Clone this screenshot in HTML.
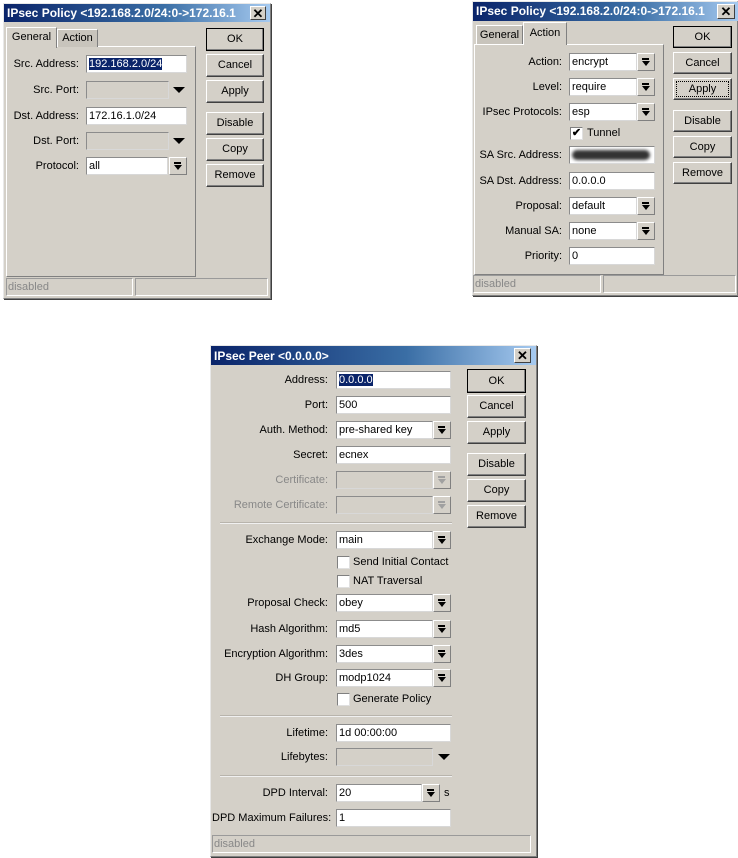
<!DOCTYPE html>
<html><head><meta charset="utf-8"><style>
*{box-sizing:border-box;margin:0;padding:0}
body{width:738px;height:858px;background:#fff;position:relative;font:11px "Liberation Sans",sans-serif;color:#000;overflow:hidden}
.a{position:absolute}
.dlg{position:absolute;background:#d4d0c8;border:1px solid #808080;border-top-color:#e8e8e8;border-left-color:#e8e8e8;box-shadow:1px 1px 0 #404040}
.tb{position:absolute;background:linear-gradient(90deg,#0a246a,#3a6ea5 60%,#a6caf0);color:#fff;font:bold 12px "Liberation Sans",sans-serif;padding:2px 0 0 3px;white-space:nowrap;overflow:hidden}
.cl{position:absolute;background:#d4d0c8;border:1px solid #404040;border-top-color:#fff;border-left-color:#fff;font:bold 13px "Liberation Sans",sans-serif;color:#000;text-align:center;line-height:13px}
.lb{position:absolute;text-align:right;white-space:nowrap;line-height:19px}
.f{position:absolute;background:#fff;border:1px solid #8c8c8c;border-right-color:#d8d8d8;border-bottom-color:#d8d8d8;height:18px;line-height:16px;padding-left:2px;white-space:nowrap;overflow:hidden}
.dis{background:#d4d0c8}
.btn{position:absolute;border:1px solid #404040;border-top-color:#fff;border-left-color:#fff;box-shadow:inset -1px -1px 0 #808080;text-align:center;line-height:20px;background:#d4d0c8}
.dd{position:absolute;width:18px;height:18px;border:1px solid #fff;border-right-color:#808080;border-bottom-color:#808080;background:#d4d0c8}
.dd:after{content:"";position:absolute;left:4px;top:4px;width:7px;height:2px;background:#000}
.dd:before{content:"";position:absolute;left:4px;top:7px;border-left:4px solid transparent;border-right:4px solid transparent;border-top:5px solid #000;width:0}
.dd.g:after{background:#a0a0a0}.dd.g:before{border-top-color:#a0a0a0}
.arr{position:absolute;width:0;height:0;border-left:6px solid transparent;border-right:6px solid transparent;border-top:6px solid #000}
.cb{position:absolute;width:13px;height:13px;background:#fff;border:1px solid #808080;border-right-color:#e0e0e0;border-bottom-color:#e0e0e0}
.st{position:absolute;border:1px solid #9a9a9a;border-right-color:#fff;border-bottom-color:#fff;height:18px;line-height:16px;color:#888;padding-left:1px}
.sep{position:absolute;height:2px;border-top:1px solid #b8b4ac;border-bottom:1px solid #f0f0f0}
.sel{background:#0a246a;color:#fff}
.gr{color:#888}
</style></head><body>

<div class="dlg" style="left:3px;top:3px;width:268px;height:296px"></div>
<div class="tb" style="left:4px;top:4px;width:266px;height:18px">IPsec Policy &lt;192.168.2.0/24:0-&gt;172.16.1</div>
<div class="cl" style="left:250px;top:6px;width:16px;height:14px">✕</div>
<div class="a" style="left:6px;top:46px;width:190px;height:231px;border:1px solid #fff;border-right-color:#808080;border-bottom-color:#808080"></div>
<div class="a" style="left:6px;top:27px;width:51px;height:21px;background:#d4d0c8;border:1px solid #fff;border-bottom:none;border-right-color:#808080;text-align:center;line-height:18px">General</div>
<div class="a" style="left:57px;top:29px;width:41px;height:18px;background:#c8c4bc;border:1px solid #fff;border-bottom:none;border-right-color:#808080;text-align:center;line-height:17px">Action</div>
<div class="lb" style="left:6px;width:73px;top:55px">Src. Address:</div>
<div class="f" style="left:86px;top:55px;width:101px"><span class="sel">192.168.2.0/24</span></div>
<div class="lb" style="left:6px;width:73px;top:81px">Src. Port:</div>
<div class="f dis" style="left:86px;top:81px;width:83px"></div>
<div class="arr" style="left:173px;top:87px"></div>
<div class="lb" style="left:6px;width:73px;top:107px">Dst. Address:</div>
<div class="f" style="left:86px;top:107px;width:101px">172.16.1.0/24</div>
<div class="lb" style="left:6px;width:73px;top:132px">Dst. Port:</div>
<div class="f dis" style="left:86px;top:132px;width:83px"></div>
<div class="arr" style="left:173px;top:138px"></div>
<div class="lb" style="left:6px;width:73px;top:157px">Protocol:</div>
<div class="f" style="left:86px;top:157px;width:82px">all</div>
<div class="dd" style="left:169px;top:157px"></div>
<div class="btn" style="left:206px;top:28px;width:58px;height:23px;border-color:#000;line-height:21px">OK</div>
<div class="btn" style="left:206px;top:54px;width:58px;height:23px">Cancel</div>
<div class="btn" style="left:206px;top:80px;width:58px;height:23px">Apply</div>
<div class="btn" style="left:206px;top:112px;width:58px;height:23px">Disable</div>
<div class="btn" style="left:206px;top:138px;width:58px;height:23px">Copy</div>
<div class="btn" style="left:206px;top:164px;width:58px;height:23px">Remove</div>
<div class="st" style="left:6px;top:278px;width:127px">disabled</div>
<div class="st" style="left:135px;top:278px;width:133px"></div>

<div class="dlg" style="left:472px;top:1px;width:266px;height:295px"></div>
<div class="tb" style="left:473px;top:2px;width:265px;height:19px">IPsec Policy &lt;192.168.2.0/24:0-&gt;172.16.1</div>
<div class="cl" style="left:717px;top:4px;width:18px;height:15px">✕</div>
<div class="a" style="left:474px;top:44px;width:190px;height:231px;border:1px solid #fff;border-right-color:#808080;border-bottom-color:#808080"></div>
<div class="a" style="left:476px;top:25px;width:47px;height:19px;background:#c8c4bc;border:1px solid #fff;border-bottom:none;border-right-color:#808080;text-align:center;line-height:18px">General</div>
<div class="a" style="left:523px;top:22px;width:44px;height:23px;background:#d4d0c8;border:1px solid #fff;border-bottom:none;border-right-color:#808080;text-align:center;line-height:20px">Action</div>
<div class="lb" style="left:474px;width:88px;top:53px">Action:</div>
<div class="f" style="left:569px;top:53px;width:68px">encrypt</div><div class="dd" style="left:637px;top:53px"></div>
<div class="lb" style="left:474px;width:88px;top:78px">Level:</div>
<div class="f" style="left:569px;top:78px;width:68px">require</div><div class="dd" style="left:637px;top:78px"></div>
<div class="lb" style="left:474px;width:88px;top:103px">IPsec Protocols:</div>
<div class="f" style="left:569px;top:103px;width:68px">esp</div><div class="dd" style="left:637px;top:103px"></div>
<div class="cb" style="left:570px;top:127px;font-size:11px;line-height:11px;text-align:center;font-weight:bold">✔</div>
<div class="a" style="left:587px;top:126px;line-height:15px">Tunnel</div>
<div class="lb" style="left:474px;width:88px;top:146px">SA Src. Address:</div>
<div class="f" style="left:569px;top:146px;width:86px"><span style="display:inline-block;margin-top:3px;width:78px;height:10px;border-radius:5px;background:#333;filter:blur(1.5px)"></span></div>
<div class="lb" style="left:474px;width:88px;top:172px">SA Dst. Address:</div>
<div class="f" style="left:569px;top:172px;width:86px">0.0.0.0</div>
<div class="lb" style="left:474px;width:88px;top:197px">Proposal:</div>
<div class="f" style="left:569px;top:197px;width:68px">default</div><div class="dd" style="left:637px;top:197px"></div>
<div class="lb" style="left:474px;width:88px;top:222px">Manual SA:</div>
<div class="f" style="left:569px;top:222px;width:68px">none</div><div class="dd" style="left:637px;top:222px"></div>
<div class="lb" style="left:474px;width:88px;top:247px">Priority:</div>
<div class="f" style="left:569px;top:247px;width:86px">0</div>
<div class="btn" style="left:673px;top:26px;width:59px;height:22px;border-color:#000;line-height:20px">OK</div>
<div class="btn" style="left:673px;top:52px;width:59px;height:22px">Cancel</div>
<div class="btn" style="left:673px;top:78px;width:59px;height:22px;outline:1px dotted #000;outline-offset:-4px">Apply</div>
<div class="btn" style="left:673px;top:110px;width:59px;height:22px">Disable</div>
<div class="btn" style="left:673px;top:136px;width:59px;height:22px">Copy</div>
<div class="btn" style="left:673px;top:162px;width:59px;height:22px">Remove</div>
<div class="st" style="left:473px;top:275px;width:128px">disabled</div>
<div class="st" style="left:603px;top:275px;width:133px"></div>

<div class="dlg" style="left:210px;top:345px;width:327px;height:512px"></div>
<div class="tb" style="left:211px;top:346px;width:325px;height:19px;padding-top:3px">IPsec Peer &lt;0.0.0.0&gt;</div>
<div class="cl" style="left:514px;top:348px;width:17px;height:15px">✕</div>

<div class="lb" style="left:212px;width:116px;top:371px">Address:</div>
<div class="f" style="left:336px;top:371px;width:115px"><span class="sel">0.0.0.0</span></div>
<div class="lb" style="left:212px;width:116px;top:396px">Port:</div>
<div class="f" style="left:336px;top:396px;width:115px">500</div>
<div class="lb" style="left:212px;width:116px;top:421px">Auth. Method:</div>
<div class="f" style="left:336px;top:421px;width:97px">pre-shared key</div><div class="dd" style="left:433px;top:421px"></div>
<div class="lb" style="left:212px;width:116px;top:446px">Secret:</div>
<div class="f" style="left:336px;top:446px;width:115px">ecnex</div>
<div class="lb gr" style="left:212px;width:116px;top:471px">Certificate:</div>
<div class="f dis" style="left:336px;top:471px;width:97px"></div><div class="dd g" style="left:433px;top:471px"></div>
<div class="lb gr" style="left:212px;width:116px;top:496px">Remote Certificate:</div>
<div class="f dis" style="left:336px;top:496px;width:97px"></div><div class="dd g" style="left:433px;top:496px"></div>
<div class="sep" style="left:220px;top:522px;width:232px"></div>
<div class="lb" style="left:212px;width:116px;top:531px">Exchange Mode:</div>
<div class="f" style="left:336px;top:531px;width:97px">main</div><div class="dd" style="left:433px;top:531px"></div>
<div class="cb" style="left:337px;top:556px"></div><div class="a" style="left:353px;top:555px;line-height:15px">Send Initial Contact</div>
<div class="cb" style="left:337px;top:575px"></div><div class="a" style="left:353px;top:574px;line-height:15px">NAT Traversal</div>
<div class="lb" style="left:212px;width:116px;top:594px">Proposal Check:</div>
<div class="f" style="left:336px;top:594px;width:97px">obey</div><div class="dd" style="left:433px;top:594px"></div>
<div class="lb" style="left:212px;width:116px;top:620px">Hash Algorithm:</div>
<div class="f" style="left:336px;top:620px;width:97px">md5</div><div class="dd" style="left:433px;top:620px"></div>
<div class="lb" style="left:212px;width:116px;top:645px">Encryption Algorithm:</div>
<div class="f" style="left:336px;top:645px;width:97px">3des</div><div class="dd" style="left:433px;top:645px"></div>
<div class="lb" style="left:212px;width:116px;top:669px">DH Group:</div>
<div class="f" style="left:336px;top:669px;width:97px">modp1024</div><div class="dd" style="left:433px;top:669px"></div>
<div class="cb" style="left:337px;top:693px"></div><div class="a" style="left:353px;top:692px;line-height:15px">Generate Policy</div>
<div class="sep" style="left:220px;top:715px;width:232px"></div>
<div class="lb" style="left:212px;width:116px;top:724px">Lifetime:</div>
<div class="f" style="left:336px;top:724px;width:115px">1d 00:00:00</div>
<div class="lb" style="left:212px;width:116px;top:748px">Lifebytes:</div>
<div class="f dis" style="left:336px;top:748px;width:97px"></div>
<div class="arr" style="left:438px;top:754px"></div>
<div class="sep" style="left:220px;top:775px;width:232px"></div>
<div class="lb" style="left:212px;width:116px;top:784px">DPD Interval:</div>
<div class="f" style="left:336px;top:784px;width:86px">20</div><div class="dd" style="left:422px;top:784px"></div>
<div class="a" style="left:444px;top:784px;line-height:19px">s</div>
<div class="lb" style="left:212px;width:116px;top:809px">DPD Maximum Failures:</div>
<div class="f" style="left:336px;top:809px;width:115px">1</div>
<div class="btn" style="left:467px;top:369px;width:59px;height:24px;border-color:#000;line-height:22px">OK</div>
<div class="btn" style="left:467px;top:395px;width:59px;height:23px">Cancel</div>
<div class="btn" style="left:467px;top:421px;width:59px;height:23px">Apply</div>
<div class="btn" style="left:467px;top:453px;width:59px;height:23px">Disable</div>
<div class="btn" style="left:467px;top:479px;width:59px;height:23px">Copy</div>
<div class="btn" style="left:467px;top:505px;width:59px;height:23px">Remove</div>
<div class="st" style="left:212px;top:835px;width:319px">disabled</div>
</body></html>
